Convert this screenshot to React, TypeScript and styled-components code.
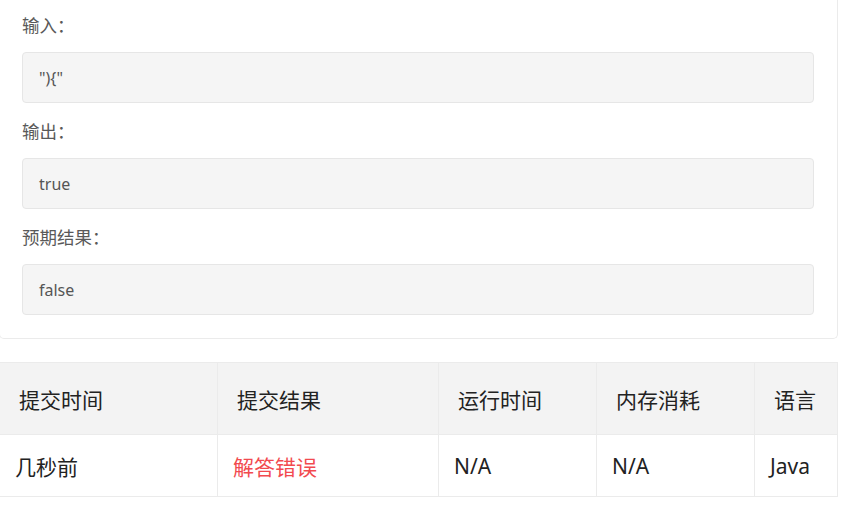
import React from 'react'
import styled, { createGlobalStyle } from 'styled-components'

const GlobalStyle = createGlobalStyle`
  html, body {
    margin: 0;
    padding: 0;
    background: #ffffff;
    overflow: hidden;
  }
  body {
    font-family: "Segoe UI", "Noto Sans", "Noto Sans CJK SC", sans-serif;
    color: #333;
  }
`;

interface Case {
  label: string;
  value: string;
}

interface Submission {
  time: string;
  result: string;
  runtime: string;
  memory: string;
  language: string;
}

const cases: Case[] = [
  { label: '输入：', value: '"){"' },
  { label: '输出：', value: 'true' },
  { label: '预期结果：', value: 'false' },
];

const submissions: Submission[] = [
  { time: '几秒前', result: '解答错误', runtime: 'N/A', memory: 'N/A', language: 'Java' },
];

const columns = [
  { title: '提交时间', width: 218 },
  { title: '提交结果', width: 221 },
  { title: '运行时间', width: 158 },
  { title: '内存消耗', width: 158 },
  { title: '语言', width: 83 },
];

export default function App() {
  return (
    <>
      <GlobalStyle />
      <Page>
        <ResultCard>
          {cases.map((c, i) => (
            <CaseBlock key={i}>
              <CaseLabel>{c.label}</CaseLabel>
              <CaseValue>{c.value}</CaseValue>
            </CaseBlock>
          ))}
        </ResultCard>

        <SubmissionTable>
          <colgroup>
            {columns.map((col) => (
              <col key={col.title} style={{ width: col.width }} />
            ))}
          </colgroup>
          <thead>
            <tr>
              {columns.map((col) => (
                <HeadCell key={col.title}>{col.title}</HeadCell>
              ))}
            </tr>
          </thead>
          <tbody>
            {submissions.map((s, i) => (
              <tr key={i}>
                <BodyCell>{s.time}</BodyCell>
                <BodyCell $status="error">{s.result}</BodyCell>
                <BodyCell>{s.runtime}</BodyCell>
                <BodyCell>{s.memory}</BodyCell>
                <BodyCell>{s.language}</BodyCell>
              </tr>
            ))}
          </tbody>
        </SubmissionTable>
      </Page>
    </>
  )
}

const Page = styled.div`
  width: 839px;
  margin-left: -1px;
`;

const ResultCard = styled.div`
  background: #fff;
  border: 1px solid #ebebeb;
  border-top: none;
  border-radius: 0 0 5px 5px;
  padding: 12px 23px 23px 22px;
`;

const CaseBlock = styled.div`
  & + & {
    margin-top: 15px;
  }
`;

const CaseLabel = styled.div`
  font-size: 17.5px;
  line-height: 26px;
  color: #595959;
  margin-bottom: 14px;
`;

const CaseValue = styled.div`
  box-sizing: border-box;
  height: 51px;
  padding: 0 16px;
  display: flex;
  align-items: center;
  background: #f5f5f5;
  border: 1px solid #e6e6e6;
  border-radius: 4px;
  font-size: 16px;
  color: #555;
`;

const SubmissionTable = styled.table`
  margin-top: 23px;
  width: 839px;
  table-layout: fixed;
  border-collapse: collapse;
  border: 1px solid #ebebeb;
  font-size: 21px;
`;

const HeadCell = styled.th`
  height: 71px;
  padding: 0 0 0 19px;
  text-align: left;
  font-weight: 400;
  color: #222;
  background: #f3f3f3;
  border: 1px solid #ebebeb;
`;

const BodyCell = styled.td<{ $status?: 'error' }>`
  height: 61px;
  padding: 0 0 0 15px;
  text-align: left;
  color: ${(p) => (p.$status === 'error' ? '#f24a4f' : '#222')};
  border: 1px solid #ebebeb;
`;
